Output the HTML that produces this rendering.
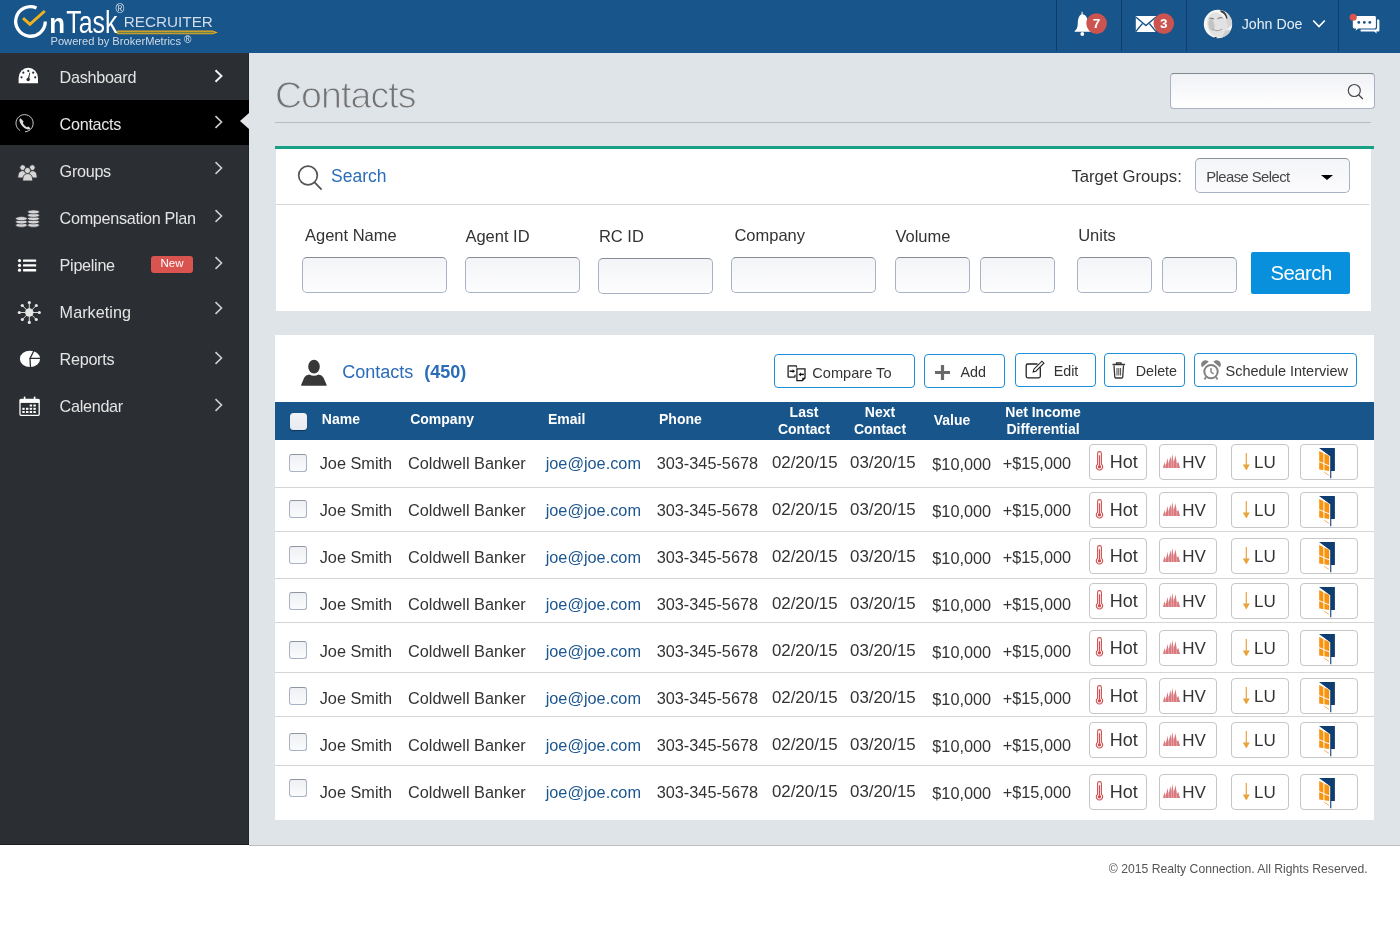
<!DOCTYPE html>
<html><head><meta charset="utf-8"><title>Contacts</title>
<style>
html,body{margin:0;padding:0;}
body{width:1400px;height:929px;position:relative;overflow:hidden;background:#fff;font-family:'Liberation Sans', sans-serif;}
.t{position:absolute;line-height:1;white-space:nowrap;}
#root{position:absolute;left:0;top:0;width:1400px;height:929px;will-change:transform;}
</style></head><body>
<div id="root">
<div style="position:absolute;left:0px;top:0px;width:1400px;height:53px;background:#17558a"></div>
<svg style="position:absolute;left:0;top:0" width="230" height="53" viewBox="0 0 230 53">
<path d="M36.5 7.9 A14.8 14.8 0 1 0 45.3 21.5" fill="none" stroke="#fff" stroke-width="3.3"/>
<polyline points="23,18.2 29.9,24.3 44.8,11" fill="none" stroke="#f3b11d" stroke-width="3"/>
<text x="49.3" y="33" font-family="Liberation Sans" font-weight="bold" font-size="28.5" fill="#fff" textLength="15.8" lengthAdjust="spacingAndGlyphs">n</text>
<text x="66.2" y="33" font-family="Liberation Sans" font-size="31" fill="#fff" textLength="51.2" lengthAdjust="spacingAndGlyphs">Task</text>
<text x="115.5" y="12.9" font-family="Liberation Sans" font-size="12" fill="#dfe6ee">&#174;</text>
<text x="123.7" y="27" font-family="Liberation Sans" font-size="14.9" fill="#d3dce7" textLength="89.2" lengthAdjust="spacingAndGlyphs">RECRUITER</text>
<path d="M117.7 31.1 L212.5 31.1 L216.3 32.4 L212.5 33.7 L117.7 33.7 Z" fill="#6b8050" stroke="#eaaa1c" stroke-width="1.1"/>
<text x="50.5" y="45.4" font-family="Liberation Sans" font-size="10.6" fill="#cfdae6" textLength="130.5" lengthAdjust="spacingAndGlyphs">Powered by BrokerMetrics</text>
<text x="184" y="42.9" font-family="Liberation Sans" font-size="10" fill="#dfe6ee">&#174;</text>
</svg>
<div style="position:absolute;left:1056px;top:0px;width:1px;height:51px;background:#0f3d6b"></div>
<div style="position:absolute;left:1121px;top:0px;width:1px;height:51px;background:#0f3d6b"></div>
<div style="position:absolute;left:1186px;top:0px;width:1px;height:51px;background:#0f3d6b"></div>
<div style="position:absolute;left:1338px;top:0px;width:1px;height:51px;background:#0f3d6b"></div>
<svg style="position:absolute;left:1070px;top:8px" width="40" height="32" viewBox="0 0 40 32">
<path d="M11.6 3.8 L12.6 3.8 L12.7 6.3 C16.5 7 17.8 10.5 17.8 15 C17.8 19 18.8 21.5 21 23 L21 23.7 L4.6 23.7 L4.6 23 C6.8 21.5 7.8 19 7.8 15 C7.8 10.5 9.4 7 11.5 6.3 Z" fill="#fff"/>
<circle cx="12.3" cy="26" r="1.9" fill="#fff"/>
<circle cx="26.6" cy="15.6" r="10.3" fill="#cc5450"/>
<text x="26.6" y="20.4" text-anchor="middle" font-family="Liberation Sans" font-weight="bold" font-size="13.5" fill="#fff">7</text>
</svg>
<svg style="position:absolute;left:1130px;top:8px" width="48" height="32" viewBox="0 0 48 32">
<path d="M5.8 8 L26 8 L26 24 L5.8 24 Z" fill="#fff"/>
<path d="M5.8 9 L15.9 17.5 L26 9" fill="none" stroke="#17558a" stroke-width="1.4"/>
<path d="M5.8 23.5 L12.5 15.5 M26 23.5 L19.3 15.5" fill="none" stroke="#17558a" stroke-width="1.2"/>
<circle cx="33.8" cy="15.6" r="10.3" fill="#cc5450"/>
<text x="33.8" y="20.4" text-anchor="middle" font-family="Liberation Sans" font-weight="bold" font-size="13.5" fill="#fff">3</text>
</svg>
<svg style="position:absolute;left:1203px;top:9px" width="30" height="30" viewBox="0 0 30 30">
<defs><clipPath id="ac"><circle cx="15" cy="15" r="14.2"/></clipPath></defs>
<circle cx="15" cy="15" r="14.2" fill="#f6f6f6"/>
<g clip-path="url(#ac)">
<path d="M23 2 C27 5 29 10 29 16 L24 20 L22 6 Z" fill="#d6d6d6"/>
<ellipse cx="14" cy="16" rx="9.5" ry="13" transform="rotate(-18 14 16)" fill="#e2e2e2"/>
<ellipse cx="8.5" cy="16" rx="3" ry="6" transform="rotate(-10 8.5 16)" fill="#bdbdbd" opacity="0.8"/>
<path d="M17.5 1 C21 1.5 23.5 4 24.5 9 L23.5 10 C22.5 6.5 20.5 4 17.5 3 Z" fill="#3c3c3c"/>
<path d="M6.5 9.5 C8 9 10 9.2 11 10.3 M14.5 9.8 C16 8.6 18.5 8.4 19.5 9" fill="none" stroke="#666" stroke-width="1"/>
<path d="M9.5 20 C12 22 16 22.3 19 20" fill="none" stroke="#9a9a9a" stroke-width="1"/>
<path d="M11 28 L12.5 30 L14 28 Z" fill="#333"/>
<path d="M22 22 C24 21 27 20 29 22 L29 30 L18 30 Z" fill="#cfcfcf"/>
</g></svg>
<div class="t" style="left:1241.7px;top:17.3px;font-size:14.2px;color:#e9eef4;">John Doe</div>
<svg style="position:absolute;left:1310px;top:17px" width="18" height="14" viewBox="0 0 18 14">
<polyline points="3.2,3.5 9,9.5 14.8,3.5" fill="none" stroke="#fff" stroke-width="1.7"/></svg>
<svg style="position:absolute;left:1346px;top:10px" width="40" height="30" viewBox="0 0 40 30">
<path d="M14 9 L32.5 9 Q34 9 34 10.5 L34 20.5 Q34 22 32.5 22 L31 22 L31.8 25.2 L28 22 L14 22 Z" fill="#fff" stroke="#17558a" stroke-width="1.2"/>
<path d="M8.2 5.5 L28.5 5.5 Q30.5 5.5 30.5 7.5 L30.5 17 Q30.5 19 28.5 19 L12.5 19 L8.5 22.5 L9.4 19 L8.2 19 Q6.2 19 6.2 17 L6.2 7.5 Q6.2 5.5 8.2 5.5 Z" fill="#fff" stroke="#17558a" stroke-width="1.2"/>
<circle cx="12.8" cy="12.4" r="1.4" fill="#17558a"/><circle cx="18.3" cy="12.4" r="1.4" fill="#17558a"/><circle cx="23.8" cy="12.4" r="1.4" fill="#17558a"/>
<circle cx="7.2" cy="7.25" r="3.6" fill="#d9534f"/>
</svg>
<div style="position:absolute;left:0px;top:53px;width:249px;height:792px;background:#2b2e33"></div>
<div style="position:absolute;left:248px;top:53px;width:1px;height:792px;background:#23262b"></div>
<div style="position:absolute;left:0px;top:844px;width:249px;height:1px;background:#1c1e22"></div>
<div style="position:absolute;left:0px;top:100px;width:249px;height:45px;background:#000"></div>
<div style="position:absolute;left:240px;top:112.8px;width:0;height:0;border-top:8.8px solid transparent;border-bottom:8.8px solid transparent;border-right:9px solid #e1e5e9"></div>
<div class="t" style="left:59.6px;top:68.7px;font-size:16.2px;color:#e4e4e4;letter-spacing:-0.3px;">Dashboard</div>
<svg style="position:absolute;left:212px;top:68.2px" width="14" height="16" viewBox="0 0 14 16"><polyline points="3.5,2.2 9.5,8 3.5,13.8" fill="none" stroke="#f4f4f4" stroke-width="1.9"/></svg>
<div class="t" style="left:59.6px;top:115.7px;font-size:16.2px;color:#e8e8e8;letter-spacing:-0.3px;">Contacts</div>
<svg style="position:absolute;left:212px;top:114.2px" width="14" height="16" viewBox="0 0 14 16"><polyline points="3.5,2.2 9.5,8 3.5,13.8" fill="none" stroke="#cfcfcf" stroke-width="1.6"/></svg>
<div class="t" style="left:59.6px;top:162.7px;font-size:16.2px;color:#e4e4e4;letter-spacing:-0.3px;">Groups</div>
<svg style="position:absolute;left:212px;top:160.0px" width="14" height="16" viewBox="0 0 14 16"><polyline points="3.5,2.2 9.5,8 3.5,13.8" fill="none" stroke="#cfcfcf" stroke-width="1.6"/></svg>
<div class="t" style="left:59.6px;top:209.7px;font-size:16.2px;color:#e4e4e4;letter-spacing:-0.3px;">Compensation Plan</div>
<svg style="position:absolute;left:212px;top:208.3px" width="14" height="16" viewBox="0 0 14 16"><polyline points="3.5,2.2 9.5,8 3.5,13.8" fill="none" stroke="#cfcfcf" stroke-width="1.6"/></svg>
<div class="t" style="left:59.6px;top:256.7px;font-size:16.2px;color:#e4e4e4;letter-spacing:-0.3px;">Pipeline</div>
<svg style="position:absolute;left:212px;top:254.8px" width="14" height="16" viewBox="0 0 14 16"><polyline points="3.5,2.2 9.5,8 3.5,13.8" fill="none" stroke="#cfcfcf" stroke-width="1.6"/></svg>
<div class="t" style="left:59.6px;top:303.7px;font-size:16.2px;color:#e4e4e4;letter-spacing:0.05px;">Marketing</div>
<svg style="position:absolute;left:212px;top:300.4px" width="14" height="16" viewBox="0 0 14 16"><polyline points="3.5,2.2 9.5,8 3.5,13.8" fill="none" stroke="#cfcfcf" stroke-width="1.6"/></svg>
<div class="t" style="left:59.6px;top:350.7px;font-size:16.2px;color:#e4e4e4;letter-spacing:-0.3px;">Reports</div>
<svg style="position:absolute;left:212px;top:349.8px" width="14" height="16" viewBox="0 0 14 16"><polyline points="3.5,2.2 9.5,8 3.5,13.8" fill="none" stroke="#cfcfcf" stroke-width="1.6"/></svg>
<div class="t" style="left:59.6px;top:397.7px;font-size:16.2px;color:#e4e4e4;letter-spacing:-0.3px;">Calendar</div>
<svg style="position:absolute;left:212px;top:397.2px" width="14" height="16" viewBox="0 0 14 16"><polyline points="3.5,2.2 9.5,8 3.5,13.8" fill="none" stroke="#cfcfcf" stroke-width="1.6"/></svg>
<div style="position:absolute;left:151px;top:256px;width:42px;height:17px;background:#d9534f;border-radius:3px"></div>
<div class="t" style="left:72.0px;width:200px;text-align:center;top:257.6px;font-size:11.5px;color:#fff;">New</div>
<svg style="position:absolute;left:0;top:53px" width="60" height="380" viewBox="0 53 60 380" fill="#e6e6e6">
<!-- dashboard gauge -->
<path d="M18.6 83.3 L18.6 78 A9.7 10.3 0 0 1 38 78 L38 83.3 Z" fill="#fff"/>
<circle cx="28.3" cy="70.9" r="1.1" fill="#2b2e33"/><circle cx="23.3" cy="72.7" r="1.1" fill="#2b2e33"/><circle cx="33.2" cy="72.7" r="1.1" fill="#2b2e33"/>
<circle cx="21.5" cy="77.3" r="1.1" fill="#2b2e33"/><circle cx="35.2" cy="77.3" r="1.1" fill="#2b2e33"/>
<circle cx="28.2" cy="79.5" r="1.7" fill="#2b2e33"/><path d="M27.5 79.5 L29.5 72.5 L30.2 72.7 L29 79.7 Z" fill="#2b2e33"/>
<!-- phone -->
<path d="M20 130.5 A8.6 8.6 0 1 1 25 131.8" fill="none" stroke="#ddd" stroke-width="0.9"/>
<path d="M20.5 118.3 C19.3 119 19.1 120.3 19.8 122.2 C21.2 125.5 23.7 128 27 129.3 C28.6 129.9 29.8 129.5 30.4 128.4 L28.6 126.4 L27 127.2 C25.3 126.3 23.7 124.7 22.8 123 L23.6 121.4 Z" fill="#ddd"/>
<!-- groups -->
<g fill="#d6d6d6" stroke="#2b2e33" stroke-width="0.9">
<circle cx="22.7" cy="167.6" r="2.9"/><circle cx="32.3" cy="167.6" r="2.9"/>
<path d="M17.8 178 C17.8 173 19.5 170.7 22.7 170.7 C25.9 170.7 27.6 173 27.6 178 Z"/>
<path d="M27.4 178 C27.4 173 29.1 170.7 32.3 170.7 C35.5 170.7 37.2 173 37.2 178 Z"/>
<circle cx="27.5" cy="170.5" r="3.1"/>
<path d="M22.6 181 C22.6 176 24.6 173.6 27.6 173.6 C30.6 173.6 32.8 176 32.8 181 Z"/>
</g>
<!-- coins -->
<g fill="#d6d6d6" stroke="#2b2e33" stroke-width="0.7">
<rect x="15.6" y="223.2" width="11.6" height="4" rx="5.8" ry="1.9"/>
<rect x="15.6" y="219.9" width="11.6" height="4" rx="5.8" ry="1.9"/>
<rect x="15.6" y="216.6" width="11.6" height="4" rx="5.8" ry="1.9"/>
<rect x="27.6" y="223.2" width="11.8" height="4" rx="5.9" ry="1.9"/>
<rect x="27.6" y="219.9" width="11.8" height="4" rx="5.9" ry="1.9"/>
<rect x="27.6" y="216.6" width="11.8" height="4" rx="5.9" ry="1.9"/>
<rect x="27.6" y="213.3" width="11.8" height="4" rx="5.9" ry="1.9"/>
<rect x="27.6" y="209.9" width="11.8" height="4" rx="5.9" ry="1.9"/>
</g>
<!-- list -->
<g fill="#fff"><circle cx="19.5" cy="260.6" r="1.6"/><circle cx="19.5" cy="265.4" r="1.6"/><circle cx="19.5" cy="270.2" r="1.6"/>
<rect x="23" y="259.5" width="13.2" height="2.3" rx="0.6"/><rect x="23" y="264.3" width="13.2" height="2.3" rx="0.6"/><rect x="23" y="269.1" width="13.2" height="2.3" rx="0.6"/></g>
<!-- marketing -->
<g stroke="#e6e6e6" stroke-width="0.9">
<path d="M29.3 302.5 L29.3 322.5 M19.3 312.5 L39.3 312.5 M22.2 305.4 L36.4 319.6 M36.4 305.4 L22.2 319.6"/>
</g>
<circle cx="29.3" cy="312.5" r="4.2"/>
<circle cx="29.3" cy="302.6" r="1.6"/><circle cx="29.3" cy="322.4" r="1.6"/><circle cx="19.3" cy="312.5" r="1.6"/><circle cx="39.3" cy="312.5" r="1.6"/>
<circle cx="22.3" cy="305.5" r="1.6"/><circle cx="36.3" cy="305.5" r="1.6"/><circle cx="22.3" cy="319.5" r="1.6"/><circle cx="36.3" cy="319.5" r="1.6"/>
<!-- reports pie -->
<ellipse cx="30" cy="358.9" rx="10.1" ry="8.2" fill="#fff"/>
<path d="M34.3 350 L30 358.4 L41 358.4 M30 358.4 L30.5 368" fill="none" stroke="#2b2e33" stroke-width="1.3"/>
<!-- calendar -->
<rect x="20" y="399.3" width="19.2" height="16" rx="1" fill="none" stroke="#fff" stroke-width="1.3"/>
<rect x="20" y="399.3" width="19.2" height="3.6" fill="#fff"/>
<rect x="23.8" y="396.6" width="1.6" height="4.5" fill="#fff"/><rect x="33.8" y="396.6" width="1.6" height="4.5" fill="#fff"/>
<g fill="#fff"><rect x="22.3" y="407.8" width="2.4" height="2"/><rect x="26" y="407.8" width="2.4" height="2"/><rect x="29.7" y="404.5" width="2.4" height="2"/><rect x="33.4" y="404.5" width="2.4" height="2"/>
<rect x="29.7" y="407.8" width="2.4" height="2"/><rect x="33.4" y="407.8" width="2.4" height="2"/>
<rect x="22.3" y="411" width="2.4" height="2"/><rect x="26" y="411" width="2.4" height="2"/><rect x="29.7" y="411" width="2.4" height="2"/><rect x="33.4" y="411" width="2.4" height="2"/></g>
</svg>
<div style="position:absolute;left:249px;top:53px;width:1151px;height:792px;background:#dfe4e8"></div>
<div style="position:absolute;left:249px;top:845px;width:1151px;height:1px;background:#bcbfc2"></div>
<div class="t" style="left:274.9px;top:76.6px;font-size:37.5px;color:#737373;letter-spacing:-0.9px;-webkit-text-stroke:1px #dfe4e8;">Contacts</div>
<div style="position:absolute;left:275px;top:122px;width:1096px;height:1px;background:#b9bcbf"></div>
<div style="position:absolute;left:1170px;top:73px;width:203px;height:34px;border:1px solid #a9b1c5;border-top-color:#808890;border-radius:4px;background:linear-gradient(#f1f2f6,#fff)"></div>
<svg style="position:absolute;left:1344px;top:80px" width="24" height="24" viewBox="0 0 24 24">
<circle cx="10.3" cy="10.5" r="6" fill="none" stroke="#444" stroke-width="1.15"/><path d="M14.6 14.8 L18.8 19" stroke="#444" stroke-width="1.25"/></svg>
<div style="position:absolute;left:276px;top:146px;width:1095px;height:165px;background:#fff"></div>
<div style="position:absolute;left:275px;top:146px;width:1099px;height:3px;background:#17a085"></div>
<div style="position:absolute;left:276px;top:204px;width:1093px;height:1px;background:#d6d6d6"></div>
<svg style="position:absolute;left:294px;top:162px" width="32" height="32" viewBox="0 0 32 32">
<circle cx="14" cy="13.5" r="9.3" fill="none" stroke="#555" stroke-width="1.7"/><path d="M20.6 20.4 L27.6 27.6" stroke="#555" stroke-width="1.8"/></svg>
<div class="t" style="left:331.1px;top:168.2px;font-size:17.5px;color:#2a6cb8;">Search</div>
<div class="t" style="left:1071.4px;top:169.1px;font-size:16.7px;color:#333;">Target Groups:</div>
<div style="position:absolute;left:1195px;top:158px;width:153px;height:33px;border:1px solid #a9b1c5;border-top-color:#8a9098;border-radius:5px;background:linear-gradient(#f4f5f8,#fbfbfd)"></div>
<div class="t" style="left:1206.3px;top:169.6px;font-size:14.8px;color:#444;letter-spacing:-0.55px;">Please Select</div>
<div style="position:absolute;left:1320.6px;top:174.7px;width:0;height:0;border-left:6.2px solid transparent;border-right:6.2px solid transparent;border-top:5.6px solid #000"></div>
<div class="t" style="left:305.0px;top:226.6px;font-size:16.5px;color:#333;">Agent Name</div>
<div class="t" style="left:465.4px;top:227.7px;font-size:16.5px;color:#333;">Agent ID</div>
<div class="t" style="left:598.9px;top:228.1px;font-size:16.5px;color:#333;">RC ID</div>
<div class="t" style="left:734.4px;top:226.6px;font-size:16.5px;color:#333;">Company</div>
<div class="t" style="left:895.4px;top:227.8px;font-size:16.5px;color:#333;">Volume</div>
<div class="t" style="left:1078.2px;top:226.8px;font-size:16.5px;color:#333;">Units</div>
<div style="position:absolute;left:302px;top:257px;width:143px;height:34px;border:1px solid #a9b1c5;border-top-color:#858c96;border-radius:5px;background:linear-gradient(#f3f4f7,#fdfdfe)"></div>
<div style="position:absolute;left:465px;top:257px;width:113px;height:34px;border:1px solid #a9b1c5;border-top-color:#858c96;border-radius:5px;background:linear-gradient(#f3f4f7,#fdfdfe)"></div>
<div style="position:absolute;left:598px;top:258px;width:113px;height:34px;border:1px solid #a9b1c5;border-top-color:#858c96;border-radius:5px;background:linear-gradient(#f3f4f7,#fdfdfe)"></div>
<div style="position:absolute;left:731px;top:257px;width:143px;height:34px;border:1px solid #a9b1c5;border-top-color:#858c96;border-radius:5px;background:linear-gradient(#f3f4f7,#fdfdfe)"></div>
<div style="position:absolute;left:895px;top:257px;width:73px;height:34px;border:1px solid #a9b1c5;border-top-color:#858c96;border-radius:5px;background:linear-gradient(#f3f4f7,#fdfdfe)"></div>
<div style="position:absolute;left:980px;top:257px;width:73px;height:34px;border:1px solid #a9b1c5;border-top-color:#858c96;border-radius:5px;background:linear-gradient(#f3f4f7,#fdfdfe)"></div>
<div style="position:absolute;left:1077px;top:257px;width:73px;height:34px;border:1px solid #a9b1c5;border-top-color:#858c96;border-radius:5px;background:linear-gradient(#f3f4f7,#fdfdfe)"></div>
<div style="position:absolute;left:1162px;top:257px;width:73px;height:34px;border:1px solid #a9b1c5;border-top-color:#858c96;border-radius:5px;background:linear-gradient(#f3f4f7,#fdfdfe)"></div>
<div style="position:absolute;left:1251px;top:252px;width:99px;height:42px;background:#0890dc;border-radius:2px"></div>
<div class="t" style="left:1270.5px;top:263.0px;font-size:20.3px;color:#fff;letter-spacing:-0.5px;">Search</div>
<div style="position:absolute;left:275px;top:335px;width:1099px;height:485px;background:#fff"></div>
<svg style="position:absolute;left:298px;top:357px" width="32" height="32" viewBox="0 0 32 32">
<ellipse cx="16" cy="9.7" rx="5.8" ry="6.9" fill="#383838"/>
<path d="M3.6 28.8 Q2.8 28.8 3.2 27.8 L6.3 20.4 Q7.5 18 11.2 17.4 Q16 20.2 20.5 17.4 Q24.2 18 25.4 20.4 L28.6 27.8 Q29 28.8 28.2 28.8 Z" fill="#383838"/></svg>
<div class="t" style="left:342.3px;top:362.7px;font-size:18px;color:#2a6cb8;">Contacts</div>
<div class="t" style="left:424.2px;top:362.7px;font-size:18px;color:#2a6cb8;font-weight:bold;">(450)</div>
<div style="position:absolute;left:774px;top:354px;width:139px;height:32px;border:1px solid #1b8fd8;border-radius:4px;background:#fff"></div>
<div style="position:absolute;left:924px;top:354px;width:79px;height:32px;border:1px solid #1b8fd8;border-radius:4px;background:#fff"></div>
<div style="position:absolute;left:1015px;top:353px;width:79px;height:32px;border:1px solid #1b8fd8;border-radius:4px;background:#fff"></div>
<div style="position:absolute;left:1104px;top:353px;width:79px;height:32px;border:1px solid #1b8fd8;border-radius:4px;background:#fff"></div>
<div style="position:absolute;left:1194px;top:353px;width:161px;height:32px;border:1px solid #1b8fd8;border-radius:4px;background:#fff"></div>
<div class="t" style="left:812.3px;top:365.7px;font-size:14.6px;color:#333;">Compare To</div>
<div class="t" style="left:960.5px;top:364.8px;font-size:14.3px;color:#333;">Add</div>
<div class="t" style="left:1053.7px;top:363.9px;font-size:14.3px;color:#333;">Edit</div>
<div class="t" style="left:1135.7px;top:363.9px;font-size:14.3px;color:#333;">Delete</div>
<div class="t" style="left:1225.5px;top:363.7px;font-size:14.5px;color:#333;">Schedule Interview</div>
<svg style="position:absolute;left:784px;top:362px" width="26" height="22" viewBox="0 0 26 22">
<path d="M12.5 5.6 L12.5 4.5 Q12.5 3.9 11.9 3.9 L4.7 3.9 Q4.1 3.9 4.1 4.5 L4.1 14.4 Q4.1 15 4.7 15 L10.4 15 Q11 15 11 14.4 L11 12.8" fill="none" stroke="#1a1a1a" stroke-width="1.25"/>
<path d="M12.9 6.9 L21 6.9 L21 16 L18.4 18.6 L12.9 18.6 Z" fill="#fff" stroke="#1a1a1a" stroke-width="1.25"/>
<path d="M18.2 18.6 L18.2 15.8 L21 15.8 Z" fill="#1a1a1a"/>
<path d="M5.6 9.2 L9.2 9.2" stroke="#111" stroke-width="1.5"/><path d="M8.6 7.3 L11.1 9.2 L8.6 11.1 Z" fill="#111"/>
<path d="M16.6 12.4 L19.9 12.4" stroke="#111" stroke-width="1.5"/><path d="M17 10.5 L14.5 12.4 L17 14.3 Z" fill="#111"/></svg>
<svg style="position:absolute;left:933px;top:363px" width="20" height="20" viewBox="0 0 20 20">
<path d="M9.5 2 L9.5 17 M2 9.5 L17 9.5" stroke="#6a6a6a" stroke-width="3.2"/></svg>
<svg style="position:absolute;left:1023px;top:359px" width="24" height="22" viewBox="0 0 24 22">
<path d="M14.6 5 L4.7 5 Q3.2 5 3.2 6.5 L3.2 17.3 Q3.2 18.8 4.7 18.8 L15.8 18.8 Q17.3 18.8 17.3 17.3 L17.3 8.2" fill="none" stroke="#222" stroke-width="1.3"/>
<path d="M10.2 12.9 L10.9 10.2 L18.9 2.2 L20.9 4.2 L12.9 12.2 Z" fill="#fff" stroke="#222" stroke-width="1.1"/></svg>
<svg style="position:absolute;left:1110px;top:359px" width="18" height="22" viewBox="0 0 18 22">
<path d="M2.5 5.5 L15 5.5 M6.5 5.5 L6.5 3.8 L11 3.8 L11 5.5" fill="none" stroke="#333" stroke-width="1.3"/>
<path d="M4 6.5 L4.8 18.2 Q5 19 6 19 L11.6 19 Q12.6 19 12.7 18.2 L13.5 6.5" fill="none" stroke="#333" stroke-width="1.3"/>
<path d="M7 9 L7 16.5 M8.8 9 L8.8 16.5 M10.6 9 L10.6 16.5" stroke="#333" stroke-width="0.9"/></svg>
<svg style="position:absolute;left:1199px;top:358px" width="24" height="24" viewBox="0 0 24 24">
<circle cx="12" cy="13.6" r="6.7" fill="none" stroke="#808080" stroke-width="2"/>
<path d="M3.1 9.2 A4.1 4.1 0 0 1 9.7 3.8 Z M20.9 9.2 A4.1 4.1 0 0 0 14.3 3.8 Z" fill="#808080"/>
<path d="M12 10 L12 14 L14.6 15.9" fill="none" stroke="#808080" stroke-width="1.4"/>
<path d="M7 19 L5.5 21.5 M17 19 L18.5 21.5" stroke="#888" stroke-width="1.8"/></svg>
<div style="position:absolute;left:275px;top:402px;width:1099px;height:38px;background:#17558a"></div>
<div style="position:absolute;left:289.5px;top:413px;width:17.5px;height:17px;background:linear-gradient(#f2f3f7,#e9eaf0);border-radius:3.5px;box-shadow:0 1px 1px rgba(0,0,0,0.35)"></div>
<div class="t" style="left:321.8px;top:412.2px;font-size:14px;color:#fff;font-weight:bold;">Name</div>
<div class="t" style="left:410.2px;top:412.2px;font-size:14px;color:#fff;font-weight:bold;">Company</div>
<div class="t" style="left:548.0px;top:412.2px;font-size:14px;color:#fff;font-weight:bold;">Email</div>
<div class="t" style="left:659.0px;top:412.2px;font-size:14px;color:#fff;font-weight:bold;">Phone</div>
<div class="t" style="left:704.0px;width:200px;text-align:center;top:405.3px;font-size:14px;color:#fff;font-weight:bold;">Last</div>
<div class="t" style="left:704.0px;width:200px;text-align:center;top:422.0px;font-size:14px;color:#fff;font-weight:bold;">Contact</div>
<div class="t" style="left:780.0px;width:200px;text-align:center;top:405.3px;font-size:14px;color:#fff;font-weight:bold;">Next</div>
<div class="t" style="left:780.0px;width:200px;text-align:center;top:422.0px;font-size:14px;color:#fff;font-weight:bold;">Contact</div>
<div class="t" style="left:943.0px;width:200px;text-align:center;top:405.3px;font-size:14px;color:#fff;font-weight:bold;">Net Income</div>
<div class="t" style="left:943.0px;width:200px;text-align:center;top:422.0px;font-size:14px;color:#fff;font-weight:bold;">Differential</div>
<div class="t" style="left:852.0px;width:200px;text-align:center;top:412.9px;font-size:14px;color:#fff;font-weight:bold;">Value</div>
<div style="position:absolute;left:275px;top:487px;width:1099px;height:1px;background:#d5d5d5"></div>
<div style="position:absolute;left:275px;top:531px;width:1099px;height:1px;background:#d5d5d5"></div>
<div style="position:absolute;left:275px;top:578px;width:1099px;height:1px;background:#d5d5d5"></div>
<div style="position:absolute;left:275px;top:622px;width:1099px;height:1px;background:#d5d5d5"></div>
<div style="position:absolute;left:275px;top:672px;width:1099px;height:1px;background:#d5d5d5"></div>
<div style="position:absolute;left:275px;top:716px;width:1099px;height:1px;background:#d5d5d5"></div>
<div style="position:absolute;left:275px;top:765px;width:1099px;height:1px;background:#d5d5d5"></div>
<div style="position:absolute;left:289px;top:454px;width:16px;height:16px;border:1px solid #a9b1c5;border-top-color:#8f96a0;border-radius:3px;background:linear-gradient(#eef0f4,#fafbfc)"></div>
<div class="t" style="left:319.7px;top:455.3px;font-size:16.3px;color:#333;">Joe Smith</div>
<div class="t" style="left:408.0px;top:455.3px;font-size:16.3px;color:#333;">Coldwell Banker</div>
<div class="t" style="left:545.7px;top:455.3px;font-size:16.3px;color:#1c5690;">joe@joe.com</div>
<div class="t" style="left:656.7px;top:455.3px;font-size:16.3px;color:#333;">303-345-5678</div>
<div class="t" style="left:771.9px;top:454.8px;font-size:16.9px;color:#333;">02/20/15</div>
<div class="t" style="left:850.0px;top:454.8px;font-size:16.9px;color:#333;">03/20/15</div>
<div class="t" style="left:932.3px;top:456.1px;font-size:16.3px;color:#333;">$10,000</div>
<div class="t" style="left:1002.7px;top:455.3px;font-size:16.3px;color:#333;">+$15,000</div>
<div style="position:absolute;left:1089px;top:444px;width:56px;height:34px;border:1px solid #c6c6c6;border-radius:4px;background:#fff"></div>
<div style="position:absolute;left:1159px;top:444px;width:56px;height:34px;border:1px solid #c6c6c6;border-radius:4px;background:#fff"></div>
<div style="position:absolute;left:1231px;top:444px;width:56px;height:34px;border:1px solid #c6c6c6;border-radius:4px;background:#fff"></div>
<div style="position:absolute;left:1300px;top:444px;width:56px;height:34px;border:1px solid #c6c6c6;border-radius:4px;background:#fff"></div>
<div class="t" style="left:1109.8px;top:453.1px;font-size:18px;color:#333;">Hot</div>
<div class="t" style="left:1182.2px;top:453.9px;font-size:17px;color:#333;">HV</div>
<div class="t" style="left:1254.0px;top:453.9px;font-size:17px;color:#333;">LU</div>
<svg style="position:absolute;left:1093px;top:450px" width="14" height="24" viewBox="0 0 14 24">
<path d="M4.6 14.2 L4.6 3.5 A1.9 1.9 0 0 1 8.4 3.5 L8.4 14.2 A3.2 3.2 0 1 1 4.6 14.2 Z" fill="none" stroke="#d0504f" stroke-width="1.1"/>
<path d="M6.5 5.2 L6.5 15" stroke="#d0504f" stroke-width="1.2"/><circle cx="6.5" cy="16.7" r="1.7" fill="#d0504f"/></svg>
<svg style="position:absolute;left:1162px;top:452px" width="19" height="17" viewBox="0 0 19 17">
<path d="M1 15.9 L1.6 13.6 L2.4 10 L3.2 13.3 L4.3 11.8 L5.4 6 L6.5 11.5 L7.3 9.3 L8.3 4 L9.3 9.5 L10.4 2.1 L11.5 9.8 L12.5 7.5 L13.5 3.2 L14.6 10 L15.4 11.2 L16.3 10 L17.3 13.5 L18 15.9 Z" fill="#d9787c"/>
<path d="M3.4 16 L3.4 13 M6.6 16 L6.6 11 M9.4 16 L9.4 9 M11.6 16 L11.6 9 M14.7 16 L14.7 10" stroke="#fff" stroke-width="0.45" opacity="0.7"/></svg>
<svg style="position:absolute;left:1240px;top:452px" width="12" height="20" viewBox="0 0 12 20">
<path d="M6.3 1 L6.3 16" stroke="#e8a33d" stroke-width="1.2"/><path d="M2.8 12.5 L6.3 18.5 L9.8 12.5 Z" fill="#e8a33d"/></svg>
<svg style="position:absolute;left:1316px;top:446px" width="22" height="34" viewBox="0 0 22 34">
<path d="M3 1.9 L18.9 1.9 L18.9 25 L15.3 25 L15.3 32.3 L14.2 32.3 L14.2 10.3 Z" fill="#0e3d70"/>
<path d="M3.2 5 L13.2 9.9 L13.2 25 L3.2 23.5 Z" fill="#f7930f"/>
<path d="M7.9 6 L7.9 27.5 M3 15.6 L13.4 19.9" stroke="#fff" stroke-width="1"/>
<path d="M8.3 26.3 L12.8 29.3" stroke="#f7a740" stroke-width="0.9"/></svg>
<div style="position:absolute;left:289px;top:500px;width:16px;height:16px;border:1px solid #a9b1c5;border-top-color:#8f96a0;border-radius:3px;background:linear-gradient(#eef0f4,#fafbfc)"></div>
<div class="t" style="left:319.7px;top:502.3px;font-size:16.3px;color:#333;">Joe Smith</div>
<div class="t" style="left:408.0px;top:502.3px;font-size:16.3px;color:#333;">Coldwell Banker</div>
<div class="t" style="left:545.7px;top:502.3px;font-size:16.3px;color:#1c5690;">joe@joe.com</div>
<div class="t" style="left:656.7px;top:502.3px;font-size:16.3px;color:#333;">303-345-5678</div>
<div class="t" style="left:771.9px;top:501.8px;font-size:16.9px;color:#333;">02/20/15</div>
<div class="t" style="left:850.0px;top:501.8px;font-size:16.9px;color:#333;">03/20/15</div>
<div class="t" style="left:932.3px;top:503.1px;font-size:16.3px;color:#333;">$10,000</div>
<div class="t" style="left:1002.7px;top:502.3px;font-size:16.3px;color:#333;">+$15,000</div>
<div style="position:absolute;left:1089px;top:492px;width:56px;height:34px;border:1px solid #c6c6c6;border-radius:4px;background:#fff"></div>
<div style="position:absolute;left:1159px;top:492px;width:56px;height:34px;border:1px solid #c6c6c6;border-radius:4px;background:#fff"></div>
<div style="position:absolute;left:1231px;top:492px;width:56px;height:34px;border:1px solid #c6c6c6;border-radius:4px;background:#fff"></div>
<div style="position:absolute;left:1300px;top:492px;width:56px;height:34px;border:1px solid #c6c6c6;border-radius:4px;background:#fff"></div>
<div class="t" style="left:1109.8px;top:501.1px;font-size:18px;color:#333;">Hot</div>
<div class="t" style="left:1182.2px;top:501.9px;font-size:17px;color:#333;">HV</div>
<div class="t" style="left:1254.0px;top:501.9px;font-size:17px;color:#333;">LU</div>
<svg style="position:absolute;left:1093px;top:498px" width="14" height="24" viewBox="0 0 14 24">
<path d="M4.6 14.2 L4.6 3.5 A1.9 1.9 0 0 1 8.4 3.5 L8.4 14.2 A3.2 3.2 0 1 1 4.6 14.2 Z" fill="none" stroke="#d0504f" stroke-width="1.1"/>
<path d="M6.5 5.2 L6.5 15" stroke="#d0504f" stroke-width="1.2"/><circle cx="6.5" cy="16.7" r="1.7" fill="#d0504f"/></svg>
<svg style="position:absolute;left:1162px;top:500px" width="19" height="17" viewBox="0 0 19 17">
<path d="M1 15.9 L1.6 13.6 L2.4 10 L3.2 13.3 L4.3 11.8 L5.4 6 L6.5 11.5 L7.3 9.3 L8.3 4 L9.3 9.5 L10.4 2.1 L11.5 9.8 L12.5 7.5 L13.5 3.2 L14.6 10 L15.4 11.2 L16.3 10 L17.3 13.5 L18 15.9 Z" fill="#d9787c"/>
<path d="M3.4 16 L3.4 13 M6.6 16 L6.6 11 M9.4 16 L9.4 9 M11.6 16 L11.6 9 M14.7 16 L14.7 10" stroke="#fff" stroke-width="0.45" opacity="0.7"/></svg>
<svg style="position:absolute;left:1240px;top:500px" width="12" height="20" viewBox="0 0 12 20">
<path d="M6.3 1 L6.3 16" stroke="#e8a33d" stroke-width="1.2"/><path d="M2.8 12.5 L6.3 18.5 L9.8 12.5 Z" fill="#e8a33d"/></svg>
<svg style="position:absolute;left:1316px;top:494px" width="22" height="34" viewBox="0 0 22 34">
<path d="M3 1.9 L18.9 1.9 L18.9 25 L15.3 25 L15.3 32.3 L14.2 32.3 L14.2 10.3 Z" fill="#0e3d70"/>
<path d="M3.2 5 L13.2 9.9 L13.2 25 L3.2 23.5 Z" fill="#f7930f"/>
<path d="M7.9 6 L7.9 27.5 M3 15.6 L13.4 19.9" stroke="#fff" stroke-width="1"/>
<path d="M8.3 26.3 L12.8 29.3" stroke="#f7a740" stroke-width="0.9"/></svg>
<div style="position:absolute;left:289px;top:546px;width:16px;height:16px;border:1px solid #a9b1c5;border-top-color:#8f96a0;border-radius:3px;background:linear-gradient(#eef0f4,#fafbfc)"></div>
<div class="t" style="left:319.7px;top:549.3px;font-size:16.3px;color:#333;">Joe Smith</div>
<div class="t" style="left:408.0px;top:549.3px;font-size:16.3px;color:#333;">Coldwell Banker</div>
<div class="t" style="left:545.7px;top:549.3px;font-size:16.3px;color:#1c5690;">joe@joe.com</div>
<div class="t" style="left:656.7px;top:549.3px;font-size:16.3px;color:#333;">303-345-5678</div>
<div class="t" style="left:771.9px;top:548.8px;font-size:16.9px;color:#333;">02/20/15</div>
<div class="t" style="left:850.0px;top:548.8px;font-size:16.9px;color:#333;">03/20/15</div>
<div class="t" style="left:932.3px;top:550.1px;font-size:16.3px;color:#333;">$10,000</div>
<div class="t" style="left:1002.7px;top:549.3px;font-size:16.3px;color:#333;">+$15,000</div>
<div style="position:absolute;left:1089px;top:538px;width:56px;height:34px;border:1px solid #c6c6c6;border-radius:4px;background:#fff"></div>
<div style="position:absolute;left:1159px;top:538px;width:56px;height:34px;border:1px solid #c6c6c6;border-radius:4px;background:#fff"></div>
<div style="position:absolute;left:1231px;top:538px;width:56px;height:34px;border:1px solid #c6c6c6;border-radius:4px;background:#fff"></div>
<div style="position:absolute;left:1300px;top:538px;width:56px;height:34px;border:1px solid #c6c6c6;border-radius:4px;background:#fff"></div>
<div class="t" style="left:1109.8px;top:547.1px;font-size:18px;color:#333;">Hot</div>
<div class="t" style="left:1182.2px;top:547.9px;font-size:17px;color:#333;">HV</div>
<div class="t" style="left:1254.0px;top:547.9px;font-size:17px;color:#333;">LU</div>
<svg style="position:absolute;left:1093px;top:544px" width="14" height="24" viewBox="0 0 14 24">
<path d="M4.6 14.2 L4.6 3.5 A1.9 1.9 0 0 1 8.4 3.5 L8.4 14.2 A3.2 3.2 0 1 1 4.6 14.2 Z" fill="none" stroke="#d0504f" stroke-width="1.1"/>
<path d="M6.5 5.2 L6.5 15" stroke="#d0504f" stroke-width="1.2"/><circle cx="6.5" cy="16.7" r="1.7" fill="#d0504f"/></svg>
<svg style="position:absolute;left:1162px;top:546px" width="19" height="17" viewBox="0 0 19 17">
<path d="M1 15.9 L1.6 13.6 L2.4 10 L3.2 13.3 L4.3 11.8 L5.4 6 L6.5 11.5 L7.3 9.3 L8.3 4 L9.3 9.5 L10.4 2.1 L11.5 9.8 L12.5 7.5 L13.5 3.2 L14.6 10 L15.4 11.2 L16.3 10 L17.3 13.5 L18 15.9 Z" fill="#d9787c"/>
<path d="M3.4 16 L3.4 13 M6.6 16 L6.6 11 M9.4 16 L9.4 9 M11.6 16 L11.6 9 M14.7 16 L14.7 10" stroke="#fff" stroke-width="0.45" opacity="0.7"/></svg>
<svg style="position:absolute;left:1240px;top:546px" width="12" height="20" viewBox="0 0 12 20">
<path d="M6.3 1 L6.3 16" stroke="#e8a33d" stroke-width="1.2"/><path d="M2.8 12.5 L6.3 18.5 L9.8 12.5 Z" fill="#e8a33d"/></svg>
<svg style="position:absolute;left:1316px;top:540px" width="22" height="34" viewBox="0 0 22 34">
<path d="M3 1.9 L18.9 1.9 L18.9 25 L15.3 25 L15.3 32.3 L14.2 32.3 L14.2 10.3 Z" fill="#0e3d70"/>
<path d="M3.2 5 L13.2 9.9 L13.2 25 L3.2 23.5 Z" fill="#f7930f"/>
<path d="M7.9 6 L7.9 27.5 M3 15.6 L13.4 19.9" stroke="#fff" stroke-width="1"/>
<path d="M8.3 26.3 L12.8 29.3" stroke="#f7a740" stroke-width="0.9"/></svg>
<div style="position:absolute;left:289px;top:592px;width:16px;height:16px;border:1px solid #a9b1c5;border-top-color:#8f96a0;border-radius:3px;background:linear-gradient(#eef0f4,#fafbfc)"></div>
<div class="t" style="left:319.7px;top:596.3px;font-size:16.3px;color:#333;">Joe Smith</div>
<div class="t" style="left:408.0px;top:596.3px;font-size:16.3px;color:#333;">Coldwell Banker</div>
<div class="t" style="left:545.7px;top:596.3px;font-size:16.3px;color:#1c5690;">joe@joe.com</div>
<div class="t" style="left:656.7px;top:596.3px;font-size:16.3px;color:#333;">303-345-5678</div>
<div class="t" style="left:771.9px;top:595.8px;font-size:16.9px;color:#333;">02/20/15</div>
<div class="t" style="left:850.0px;top:595.8px;font-size:16.9px;color:#333;">03/20/15</div>
<div class="t" style="left:932.3px;top:597.1px;font-size:16.3px;color:#333;">$10,000</div>
<div class="t" style="left:1002.7px;top:596.3px;font-size:16.3px;color:#333;">+$15,000</div>
<div style="position:absolute;left:1089px;top:583px;width:56px;height:34px;border:1px solid #c6c6c6;border-radius:4px;background:#fff"></div>
<div style="position:absolute;left:1159px;top:583px;width:56px;height:34px;border:1px solid #c6c6c6;border-radius:4px;background:#fff"></div>
<div style="position:absolute;left:1231px;top:583px;width:56px;height:34px;border:1px solid #c6c6c6;border-radius:4px;background:#fff"></div>
<div style="position:absolute;left:1300px;top:583px;width:56px;height:34px;border:1px solid #c6c6c6;border-radius:4px;background:#fff"></div>
<div class="t" style="left:1109.8px;top:592.1px;font-size:18px;color:#333;">Hot</div>
<div class="t" style="left:1182.2px;top:592.9px;font-size:17px;color:#333;">HV</div>
<div class="t" style="left:1254.0px;top:592.9px;font-size:17px;color:#333;">LU</div>
<svg style="position:absolute;left:1093px;top:589px" width="14" height="24" viewBox="0 0 14 24">
<path d="M4.6 14.2 L4.6 3.5 A1.9 1.9 0 0 1 8.4 3.5 L8.4 14.2 A3.2 3.2 0 1 1 4.6 14.2 Z" fill="none" stroke="#d0504f" stroke-width="1.1"/>
<path d="M6.5 5.2 L6.5 15" stroke="#d0504f" stroke-width="1.2"/><circle cx="6.5" cy="16.7" r="1.7" fill="#d0504f"/></svg>
<svg style="position:absolute;left:1162px;top:591px" width="19" height="17" viewBox="0 0 19 17">
<path d="M1 15.9 L1.6 13.6 L2.4 10 L3.2 13.3 L4.3 11.8 L5.4 6 L6.5 11.5 L7.3 9.3 L8.3 4 L9.3 9.5 L10.4 2.1 L11.5 9.8 L12.5 7.5 L13.5 3.2 L14.6 10 L15.4 11.2 L16.3 10 L17.3 13.5 L18 15.9 Z" fill="#d9787c"/>
<path d="M3.4 16 L3.4 13 M6.6 16 L6.6 11 M9.4 16 L9.4 9 M11.6 16 L11.6 9 M14.7 16 L14.7 10" stroke="#fff" stroke-width="0.45" opacity="0.7"/></svg>
<svg style="position:absolute;left:1240px;top:591px" width="12" height="20" viewBox="0 0 12 20">
<path d="M6.3 1 L6.3 16" stroke="#e8a33d" stroke-width="1.2"/><path d="M2.8 12.5 L6.3 18.5 L9.8 12.5 Z" fill="#e8a33d"/></svg>
<svg style="position:absolute;left:1316px;top:585px" width="22" height="34" viewBox="0 0 22 34">
<path d="M3 1.9 L18.9 1.9 L18.9 25 L15.3 25 L15.3 32.3 L14.2 32.3 L14.2 10.3 Z" fill="#0e3d70"/>
<path d="M3.2 5 L13.2 9.9 L13.2 25 L3.2 23.5 Z" fill="#f7930f"/>
<path d="M7.9 6 L7.9 27.5 M3 15.6 L13.4 19.9" stroke="#fff" stroke-width="1"/>
<path d="M8.3 26.3 L12.8 29.3" stroke="#f7a740" stroke-width="0.9"/></svg>
<div style="position:absolute;left:289px;top:641px;width:16px;height:16px;border:1px solid #a9b1c5;border-top-color:#8f96a0;border-radius:3px;background:linear-gradient(#eef0f4,#fafbfc)"></div>
<div class="t" style="left:319.7px;top:643.3px;font-size:16.3px;color:#333;">Joe Smith</div>
<div class="t" style="left:408.0px;top:643.3px;font-size:16.3px;color:#333;">Coldwell Banker</div>
<div class="t" style="left:545.7px;top:643.3px;font-size:16.3px;color:#1c5690;">joe@joe.com</div>
<div class="t" style="left:656.7px;top:643.3px;font-size:16.3px;color:#333;">303-345-5678</div>
<div class="t" style="left:771.9px;top:642.8px;font-size:16.9px;color:#333;">02/20/15</div>
<div class="t" style="left:850.0px;top:642.8px;font-size:16.9px;color:#333;">03/20/15</div>
<div class="t" style="left:932.3px;top:644.1px;font-size:16.3px;color:#333;">$10,000</div>
<div class="t" style="left:1002.7px;top:643.3px;font-size:16.3px;color:#333;">+$15,000</div>
<div style="position:absolute;left:1089px;top:630px;width:56px;height:34px;border:1px solid #c6c6c6;border-radius:4px;background:#fff"></div>
<div style="position:absolute;left:1159px;top:630px;width:56px;height:34px;border:1px solid #c6c6c6;border-radius:4px;background:#fff"></div>
<div style="position:absolute;left:1231px;top:630px;width:56px;height:34px;border:1px solid #c6c6c6;border-radius:4px;background:#fff"></div>
<div style="position:absolute;left:1300px;top:630px;width:56px;height:34px;border:1px solid #c6c6c6;border-radius:4px;background:#fff"></div>
<div class="t" style="left:1109.8px;top:639.1px;font-size:18px;color:#333;">Hot</div>
<div class="t" style="left:1182.2px;top:639.9px;font-size:17px;color:#333;">HV</div>
<div class="t" style="left:1254.0px;top:639.9px;font-size:17px;color:#333;">LU</div>
<svg style="position:absolute;left:1093px;top:636px" width="14" height="24" viewBox="0 0 14 24">
<path d="M4.6 14.2 L4.6 3.5 A1.9 1.9 0 0 1 8.4 3.5 L8.4 14.2 A3.2 3.2 0 1 1 4.6 14.2 Z" fill="none" stroke="#d0504f" stroke-width="1.1"/>
<path d="M6.5 5.2 L6.5 15" stroke="#d0504f" stroke-width="1.2"/><circle cx="6.5" cy="16.7" r="1.7" fill="#d0504f"/></svg>
<svg style="position:absolute;left:1162px;top:638px" width="19" height="17" viewBox="0 0 19 17">
<path d="M1 15.9 L1.6 13.6 L2.4 10 L3.2 13.3 L4.3 11.8 L5.4 6 L6.5 11.5 L7.3 9.3 L8.3 4 L9.3 9.5 L10.4 2.1 L11.5 9.8 L12.5 7.5 L13.5 3.2 L14.6 10 L15.4 11.2 L16.3 10 L17.3 13.5 L18 15.9 Z" fill="#d9787c"/>
<path d="M3.4 16 L3.4 13 M6.6 16 L6.6 11 M9.4 16 L9.4 9 M11.6 16 L11.6 9 M14.7 16 L14.7 10" stroke="#fff" stroke-width="0.45" opacity="0.7"/></svg>
<svg style="position:absolute;left:1240px;top:638px" width="12" height="20" viewBox="0 0 12 20">
<path d="M6.3 1 L6.3 16" stroke="#e8a33d" stroke-width="1.2"/><path d="M2.8 12.5 L6.3 18.5 L9.8 12.5 Z" fill="#e8a33d"/></svg>
<svg style="position:absolute;left:1316px;top:632px" width="22" height="34" viewBox="0 0 22 34">
<path d="M3 1.9 L18.9 1.9 L18.9 25 L15.3 25 L15.3 32.3 L14.2 32.3 L14.2 10.3 Z" fill="#0e3d70"/>
<path d="M3.2 5 L13.2 9.9 L13.2 25 L3.2 23.5 Z" fill="#f7930f"/>
<path d="M7.9 6 L7.9 27.5 M3 15.6 L13.4 19.9" stroke="#fff" stroke-width="1"/>
<path d="M8.3 26.3 L12.8 29.3" stroke="#f7a740" stroke-width="0.9"/></svg>
<div style="position:absolute;left:289px;top:687px;width:16px;height:16px;border:1px solid #a9b1c5;border-top-color:#8f96a0;border-radius:3px;background:linear-gradient(#eef0f4,#fafbfc)"></div>
<div class="t" style="left:319.7px;top:690.3px;font-size:16.3px;color:#333;">Joe Smith</div>
<div class="t" style="left:408.0px;top:690.3px;font-size:16.3px;color:#333;">Coldwell Banker</div>
<div class="t" style="left:545.7px;top:690.3px;font-size:16.3px;color:#1c5690;">joe@joe.com</div>
<div class="t" style="left:656.7px;top:690.3px;font-size:16.3px;color:#333;">303-345-5678</div>
<div class="t" style="left:771.9px;top:689.8px;font-size:16.9px;color:#333;">02/20/15</div>
<div class="t" style="left:850.0px;top:689.8px;font-size:16.9px;color:#333;">03/20/15</div>
<div class="t" style="left:932.3px;top:691.1px;font-size:16.3px;color:#333;">$10,000</div>
<div class="t" style="left:1002.7px;top:690.3px;font-size:16.3px;color:#333;">+$15,000</div>
<div style="position:absolute;left:1089px;top:678px;width:56px;height:34px;border:1px solid #c6c6c6;border-radius:4px;background:#fff"></div>
<div style="position:absolute;left:1159px;top:678px;width:56px;height:34px;border:1px solid #c6c6c6;border-radius:4px;background:#fff"></div>
<div style="position:absolute;left:1231px;top:678px;width:56px;height:34px;border:1px solid #c6c6c6;border-radius:4px;background:#fff"></div>
<div style="position:absolute;left:1300px;top:678px;width:56px;height:34px;border:1px solid #c6c6c6;border-radius:4px;background:#fff"></div>
<div class="t" style="left:1109.8px;top:687.1px;font-size:18px;color:#333;">Hot</div>
<div class="t" style="left:1182.2px;top:687.9px;font-size:17px;color:#333;">HV</div>
<div class="t" style="left:1254.0px;top:687.9px;font-size:17px;color:#333;">LU</div>
<svg style="position:absolute;left:1093px;top:684px" width="14" height="24" viewBox="0 0 14 24">
<path d="M4.6 14.2 L4.6 3.5 A1.9 1.9 0 0 1 8.4 3.5 L8.4 14.2 A3.2 3.2 0 1 1 4.6 14.2 Z" fill="none" stroke="#d0504f" stroke-width="1.1"/>
<path d="M6.5 5.2 L6.5 15" stroke="#d0504f" stroke-width="1.2"/><circle cx="6.5" cy="16.7" r="1.7" fill="#d0504f"/></svg>
<svg style="position:absolute;left:1162px;top:686px" width="19" height="17" viewBox="0 0 19 17">
<path d="M1 15.9 L1.6 13.6 L2.4 10 L3.2 13.3 L4.3 11.8 L5.4 6 L6.5 11.5 L7.3 9.3 L8.3 4 L9.3 9.5 L10.4 2.1 L11.5 9.8 L12.5 7.5 L13.5 3.2 L14.6 10 L15.4 11.2 L16.3 10 L17.3 13.5 L18 15.9 Z" fill="#d9787c"/>
<path d="M3.4 16 L3.4 13 M6.6 16 L6.6 11 M9.4 16 L9.4 9 M11.6 16 L11.6 9 M14.7 16 L14.7 10" stroke="#fff" stroke-width="0.45" opacity="0.7"/></svg>
<svg style="position:absolute;left:1240px;top:686px" width="12" height="20" viewBox="0 0 12 20">
<path d="M6.3 1 L6.3 16" stroke="#e8a33d" stroke-width="1.2"/><path d="M2.8 12.5 L6.3 18.5 L9.8 12.5 Z" fill="#e8a33d"/></svg>
<svg style="position:absolute;left:1316px;top:680px" width="22" height="34" viewBox="0 0 22 34">
<path d="M3 1.9 L18.9 1.9 L18.9 25 L15.3 25 L15.3 32.3 L14.2 32.3 L14.2 10.3 Z" fill="#0e3d70"/>
<path d="M3.2 5 L13.2 9.9 L13.2 25 L3.2 23.5 Z" fill="#f7930f"/>
<path d="M7.9 6 L7.9 27.5 M3 15.6 L13.4 19.9" stroke="#fff" stroke-width="1"/>
<path d="M8.3 26.3 L12.8 29.3" stroke="#f7a740" stroke-width="0.9"/></svg>
<div style="position:absolute;left:289px;top:733px;width:16px;height:16px;border:1px solid #a9b1c5;border-top-color:#8f96a0;border-radius:3px;background:linear-gradient(#eef0f4,#fafbfc)"></div>
<div class="t" style="left:319.7px;top:737.3px;font-size:16.3px;color:#333;">Joe Smith</div>
<div class="t" style="left:408.0px;top:737.3px;font-size:16.3px;color:#333;">Coldwell Banker</div>
<div class="t" style="left:545.7px;top:737.3px;font-size:16.3px;color:#1c5690;">joe@joe.com</div>
<div class="t" style="left:656.7px;top:737.3px;font-size:16.3px;color:#333;">303-345-5678</div>
<div class="t" style="left:771.9px;top:736.8px;font-size:16.9px;color:#333;">02/20/15</div>
<div class="t" style="left:850.0px;top:736.8px;font-size:16.9px;color:#333;">03/20/15</div>
<div class="t" style="left:932.3px;top:738.1px;font-size:16.3px;color:#333;">$10,000</div>
<div class="t" style="left:1002.7px;top:737.3px;font-size:16.3px;color:#333;">+$15,000</div>
<div style="position:absolute;left:1089px;top:722px;width:56px;height:34px;border:1px solid #c6c6c6;border-radius:4px;background:#fff"></div>
<div style="position:absolute;left:1159px;top:722px;width:56px;height:34px;border:1px solid #c6c6c6;border-radius:4px;background:#fff"></div>
<div style="position:absolute;left:1231px;top:722px;width:56px;height:34px;border:1px solid #c6c6c6;border-radius:4px;background:#fff"></div>
<div style="position:absolute;left:1300px;top:722px;width:56px;height:34px;border:1px solid #c6c6c6;border-radius:4px;background:#fff"></div>
<div class="t" style="left:1109.8px;top:731.1px;font-size:18px;color:#333;">Hot</div>
<div class="t" style="left:1182.2px;top:731.9px;font-size:17px;color:#333;">HV</div>
<div class="t" style="left:1254.0px;top:731.9px;font-size:17px;color:#333;">LU</div>
<svg style="position:absolute;left:1093px;top:728px" width="14" height="24" viewBox="0 0 14 24">
<path d="M4.6 14.2 L4.6 3.5 A1.9 1.9 0 0 1 8.4 3.5 L8.4 14.2 A3.2 3.2 0 1 1 4.6 14.2 Z" fill="none" stroke="#d0504f" stroke-width="1.1"/>
<path d="M6.5 5.2 L6.5 15" stroke="#d0504f" stroke-width="1.2"/><circle cx="6.5" cy="16.7" r="1.7" fill="#d0504f"/></svg>
<svg style="position:absolute;left:1162px;top:730px" width="19" height="17" viewBox="0 0 19 17">
<path d="M1 15.9 L1.6 13.6 L2.4 10 L3.2 13.3 L4.3 11.8 L5.4 6 L6.5 11.5 L7.3 9.3 L8.3 4 L9.3 9.5 L10.4 2.1 L11.5 9.8 L12.5 7.5 L13.5 3.2 L14.6 10 L15.4 11.2 L16.3 10 L17.3 13.5 L18 15.9 Z" fill="#d9787c"/>
<path d="M3.4 16 L3.4 13 M6.6 16 L6.6 11 M9.4 16 L9.4 9 M11.6 16 L11.6 9 M14.7 16 L14.7 10" stroke="#fff" stroke-width="0.45" opacity="0.7"/></svg>
<svg style="position:absolute;left:1240px;top:730px" width="12" height="20" viewBox="0 0 12 20">
<path d="M6.3 1 L6.3 16" stroke="#e8a33d" stroke-width="1.2"/><path d="M2.8 12.5 L6.3 18.5 L9.8 12.5 Z" fill="#e8a33d"/></svg>
<svg style="position:absolute;left:1316px;top:724px" width="22" height="34" viewBox="0 0 22 34">
<path d="M3 1.9 L18.9 1.9 L18.9 25 L15.3 25 L15.3 32.3 L14.2 32.3 L14.2 10.3 Z" fill="#0e3d70"/>
<path d="M3.2 5 L13.2 9.9 L13.2 25 L3.2 23.5 Z" fill="#f7930f"/>
<path d="M7.9 6 L7.9 27.5 M3 15.6 L13.4 19.9" stroke="#fff" stroke-width="1"/>
<path d="M8.3 26.3 L12.8 29.3" stroke="#f7a740" stroke-width="0.9"/></svg>
<div style="position:absolute;left:289px;top:779px;width:16px;height:16px;border:1px solid #a9b1c5;border-top-color:#8f96a0;border-radius:3px;background:linear-gradient(#eef0f4,#fafbfc)"></div>
<div class="t" style="left:319.7px;top:784.3px;font-size:16.3px;color:#333;">Joe Smith</div>
<div class="t" style="left:408.0px;top:784.3px;font-size:16.3px;color:#333;">Coldwell Banker</div>
<div class="t" style="left:545.7px;top:784.3px;font-size:16.3px;color:#1c5690;">joe@joe.com</div>
<div class="t" style="left:656.7px;top:784.3px;font-size:16.3px;color:#333;">303-345-5678</div>
<div class="t" style="left:771.9px;top:783.8px;font-size:16.9px;color:#333;">02/20/15</div>
<div class="t" style="left:850.0px;top:783.8px;font-size:16.9px;color:#333;">03/20/15</div>
<div class="t" style="left:932.3px;top:785.1px;font-size:16.3px;color:#333;">$10,000</div>
<div class="t" style="left:1002.7px;top:784.3px;font-size:16.3px;color:#333;">+$15,000</div>
<div style="position:absolute;left:1089px;top:774px;width:56px;height:34px;border:1px solid #c6c6c6;border-radius:4px;background:#fff"></div>
<div style="position:absolute;left:1159px;top:774px;width:56px;height:34px;border:1px solid #c6c6c6;border-radius:4px;background:#fff"></div>
<div style="position:absolute;left:1231px;top:774px;width:56px;height:34px;border:1px solid #c6c6c6;border-radius:4px;background:#fff"></div>
<div style="position:absolute;left:1300px;top:774px;width:56px;height:34px;border:1px solid #c6c6c6;border-radius:4px;background:#fff"></div>
<div class="t" style="left:1109.8px;top:783.1px;font-size:18px;color:#333;">Hot</div>
<div class="t" style="left:1182.2px;top:783.9px;font-size:17px;color:#333;">HV</div>
<div class="t" style="left:1254.0px;top:783.9px;font-size:17px;color:#333;">LU</div>
<svg style="position:absolute;left:1093px;top:780px" width="14" height="24" viewBox="0 0 14 24">
<path d="M4.6 14.2 L4.6 3.5 A1.9 1.9 0 0 1 8.4 3.5 L8.4 14.2 A3.2 3.2 0 1 1 4.6 14.2 Z" fill="none" stroke="#d0504f" stroke-width="1.1"/>
<path d="M6.5 5.2 L6.5 15" stroke="#d0504f" stroke-width="1.2"/><circle cx="6.5" cy="16.7" r="1.7" fill="#d0504f"/></svg>
<svg style="position:absolute;left:1162px;top:782px" width="19" height="17" viewBox="0 0 19 17">
<path d="M1 15.9 L1.6 13.6 L2.4 10 L3.2 13.3 L4.3 11.8 L5.4 6 L6.5 11.5 L7.3 9.3 L8.3 4 L9.3 9.5 L10.4 2.1 L11.5 9.8 L12.5 7.5 L13.5 3.2 L14.6 10 L15.4 11.2 L16.3 10 L17.3 13.5 L18 15.9 Z" fill="#d9787c"/>
<path d="M3.4 16 L3.4 13 M6.6 16 L6.6 11 M9.4 16 L9.4 9 M11.6 16 L11.6 9 M14.7 16 L14.7 10" stroke="#fff" stroke-width="0.45" opacity="0.7"/></svg>
<svg style="position:absolute;left:1240px;top:782px" width="12" height="20" viewBox="0 0 12 20">
<path d="M6.3 1 L6.3 16" stroke="#e8a33d" stroke-width="1.2"/><path d="M2.8 12.5 L6.3 18.5 L9.8 12.5 Z" fill="#e8a33d"/></svg>
<svg style="position:absolute;left:1316px;top:776px" width="22" height="34" viewBox="0 0 22 34">
<path d="M3 1.9 L18.9 1.9 L18.9 25 L15.3 25 L15.3 32.3 L14.2 32.3 L14.2 10.3 Z" fill="#0e3d70"/>
<path d="M3.2 5 L13.2 9.9 L13.2 25 L3.2 23.5 Z" fill="#f7930f"/>
<path d="M7.9 6 L7.9 27.5 M3 15.6 L13.4 19.9" stroke="#fff" stroke-width="1"/>
<path d="M8.3 26.3 L12.8 29.3" stroke="#f7a740" stroke-width="0.9"/></svg>
<div class="t" style="left:1108.8px;top:862.9px;font-size:12.2px;color:#555;">&#169; 2015 Realty Connection. All Rights Reserved.</div>
</div>
</body></html>
